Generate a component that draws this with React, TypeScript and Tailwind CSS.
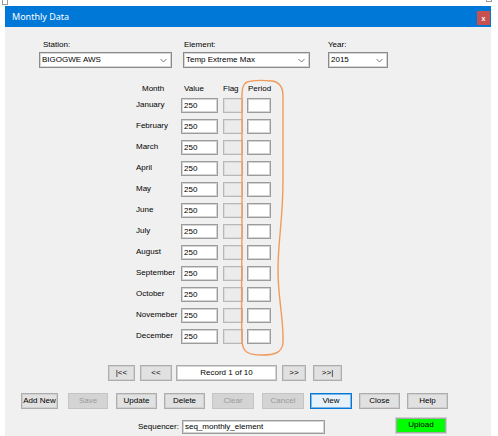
import React from "react";

const months = [
  "January","February","March","April","May","June","July","August","September","October","Novemeber","December",
];

function Chevron() {
  return (
    <svg width="7" height="5" viewBox="0 0 7 5" className="shrink-0">
      <polyline points="0.5,1 3.5,4 6.5,1" fill="none" stroke="#555" strokeWidth="0.8" />
    </svg>
  );
}

function Combo({ value, w }: { value: string; w: string }) {
  return (
    <div className={`h-[16px] ${w} bg-white border border-[#8a8a8a] shadow-[inset_0_0_0_1px_#d6d6d6] flex items-center justify-between pl-[2px] pr-[4px]`}>
      <span className="leading-none">{value}</span>
      <Chevron />
    </div>
  );
}

function Btn({ label, w, ml, disabled, focus }: { label: string; w: string; ml: string; disabled?: boolean; focus?: boolean }) {
  const base = "h-[16px] flex items-center justify-center leading-none border";
  const style = disabled
    ? "bg-[#d4d4d4] border-[#c4c4c4] text-[#9a9a9a]"
    : focus
    ? "bg-[#e5f1fb] border-[#0078d7] shadow-[inset_0_0_0_1px_#7fb4e6] text-black"
    : "bg-[#e1e1e1] border-[#adadad] shadow-[inset_0_0_0_1px_#d0d0d0] text-black";
  return <div className={`${base} ${style} ${w} ${ml}`}>{label}</div>;
}

export default function App() {
  return (
    <div className="relative w-[498px] h-[436px] bg-white overflow-hidden font-['Liberation_Sans',Arial,sans-serif] text-[8px] text-black">
      <div className="h-[6px] relative">
        <div className="absolute left-[2px] top-[-1px] w-[6px] h-[6px] border border-[#9a9a9a] bg-white" />
        <div className="absolute left-[486px] top-[-3px] w-[6px] h-[5px] border border-[#9a9a9a] bg-white" />
      </div>
      <div className="ml-[5px] w-[486px]">
        {/* title bar */}
        <div className="h-[21px] bg-[#0078d7] flex items-start justify-between pl-[7px] pr-[1px]">
          <span className="mt-[5px] text-white text-[9px] leading-[11px] font-['Noto_Sans','Liberation_Sans',sans-serif]">Monthly Data</span>
          <div className="mt-[5px] w-[13px] h-[14px] bg-[#c75050] flex items-center justify-center text-white text-[7px] font-bold leading-none">x</div>
        </div>
        {/* body */}
        <div className="h-[409px] bg-[#f0f0f0]">
          <div className="pt-[11px] pl-[34px] flex">
            <div className="w-[133px] flex flex-col">
              <div className="h-[14px] leading-[14px] pl-[4px]">Station:</div>
              <Combo value="BIGOGWE AWS" w="w-[133px]" />
            </div>
            <div className="ml-[11px] w-[127px] flex flex-col">
              <div className="h-[14px] leading-[14px] pl-[1px]">Element:</div>
              <Combo value="Temp Extreme Max" w="w-[127px]" />
            </div>
            <div className="ml-[18px] w-[60px] flex flex-col">
              <div className="h-[14px] leading-[14px]">Year:</div>
              <Combo value="2015" w="w-[60px]" />
            </div>
          </div>

          {/* header */}
          <div className="mt-[15px] h-[12px] leading-[12px] pl-[131px] flex">
            <div className="w-[45px] pl-[6px]">Month</div>
            <div className="w-[37px] pl-[3px]">Value</div>
            <div className="w-[20px] ml-[5px]">Flag</div>
            <div className="w-[24px] ml-[4px] pl-[1px]">Period</div>
          </div>

          {/* rows */}
          <div className="flex flex-col pl-[131px]">
            {months.map((m) => (
              <div key={m} className="h-[21px] flex items-center">
                <div className="w-[45px] leading-none -mt-[1px]">{m}</div>
                <div className="w-[37px] h-[15px] bg-white border border-[#9c9c9c] shadow-[inset_0_0_0_1px_#d4d4d4] flex items-center pl-[2px] leading-none">250</div>
                <div className="w-[20px] h-[15px] ml-[5px] bg-[#ececec] border border-[#b8b8b8] shadow-[inset_0_0_0_1px_#dcdcdc]" />
                <div className="w-[24px] h-[15px] ml-[4px] bg-white border border-[#9c9c9c] shadow-[inset_0_0_0_1px_#d4d4d4]" />
              </div>
            ))}
          </div>

          {/* nav */}
          <div className="mt-[18px] h-[16px] pl-[103px] flex">
            <Btn label="|<<" w="w-[27px]" ml="" />
            <Btn label="<<" w="w-[32px]" ml="ml-[5px]" />
            <div className="ml-[4px] w-[101px] h-[16px] bg-white border border-[#adadad] shadow-[inset_0_0_0_1px_#d4d4d4] flex items-center justify-center leading-none">Record 1 of 10</div>
            <Btn label=">>" w="w-[24px]" ml="ml-[5px]" />
            <Btn label=">>|" w="w-[29px]" ml="ml-[7px]" />
          </div>

          {/* actions */}
          <div className="mt-[12px] h-[16px] pl-[16px] flex">
            <Btn label="Add New" w="w-[37px]" ml="" />
            <Btn label="Save" w="w-[40px]" ml="ml-[10px]" disabled />
            <Btn label="Update" w="w-[41px]" ml="ml-[8px]" />
            <Btn label="Delete" w="w-[41px]" ml="ml-[7px]" />
            <Btn label="Clear" w="w-[42px]" ml="ml-[7px]" disabled />
            <Btn label="Cancel" w="w-[42px]" ml="ml-[8px]" disabled />
            <Btn label="View" w="w-[42px]" ml="ml-[6px]" focus />
            <Btn label="Close" w="w-[41px]" ml="ml-[7px]" />
            <Btn label="Help" w="w-[41px]" ml="ml-[7px]" />
          </div>

          {/* sequencer */}
          <div className="mt-[8px] h-[16px] flex items-center">
            <div className="ml-[133px] w-[44px] leading-none mt-[3px]">Sequencer:</div>
            <div className="w-[143px] h-[14px] mt-[3px] bg-white border border-[#9c9c9c] shadow-[inset_0_0_0_1px_#d4d4d4] flex items-center pl-[2px] leading-none">seq_monthly_element</div>
            <div className="ml-[71px] w-[50px] h-[15px] bg-[#00ff00] border border-[#a8a8a8] shadow-[0_0_0_1px_#d0d0d0] flex items-center justify-center leading-none">Upload</div>
          </div>
        </div>
      </div>

      {/* annotation */}
      <svg className="absolute inset-0 pointer-events-none" width="498" height="436" viewBox="0 0 498 436">
        <path
          d="M 247 82 C 243 84, 242 88, 242 97 L 242 200 C 242 260, 241 320, 242 342 C 243 352, 248 355, 262 355 C 274 355, 282 353, 283 343 C 284 320, 278 300, 278 270 C 278 240, 283 220, 283 180 L 283 96 C 283 86, 279 82, 272 81 C 262 80, 253 80, 247 82 Z"
          fill="none"
          stroke="#f29a5c"
          strokeWidth="1.4"
        />
      </svg>
    </div>
  );
}
